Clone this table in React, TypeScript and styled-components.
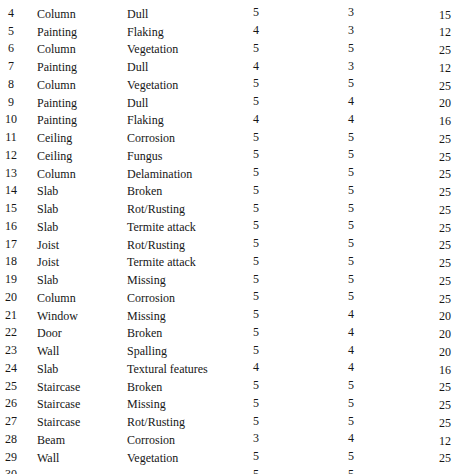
import React from "react";
import styled, { createGlobalStyle } from "styled-components";

const GlobalStyle = createGlobalStyle`
  html, body {
    margin: 0;
    padding: 0;
    background: #ffffff;
  }
  body {
    width: 474px;
    height: 474px;
    overflow: hidden;
  }
`;

const TableUI = styled.div`
  padding-top: 4.3px;
  font-family: "Liberation Serif", "Times New Roman", serif;
  font-size: 12px;
  color: #161616;
`;

const RowUI = styled.div`
  display: grid;
  grid-template-columns: 37px 90px 126px 95px 91px 1fr;
  height: 17.75px;
  line-height: 17.75px;
  white-space: nowrap;
`;

// each column of the scan sits a little higher or lower than the others
const CellUI = styled.div<{ $shift?: number; $center?: boolean }>`
  padding-top: ${(p) => p.$shift || 0}px;
  ${(p) => (p.$center ? "width: 22px; text-align: center;" : "")}
`;

const rows: string[][] = [
  ["4", "Column", "Dull", "5", "3", "15"],
  ["5", "Painting", "Flaking", "4", "3", "12"],
  ["6", "Column", "Vegetation", "5", "5", "25"],
  ["7", "Painting", "Dull", "4", "3", "12"],
  ["8", "Column", "Vegetation", "5", "5", "25"],
  ["9", "Painting", "Dull", "5", "4", "20"],
  ["10", "Painting", "Flaking", "4", "4", "16"],
  ["11", "Ceiling", "Corrosion", "5", "5", "25"],
  ["12", "Ceiling", "Fungus", "5", "5", "25"],
  ["13", "Column", "Delamination", "5", "5", "25"],
  ["14", "Slab", "Broken", "5", "5", "25"],
  ["15", "Slab", "Rot/Rusting", "5", "5", "25"],
  ["16", "Slab", "Termite attack", "5", "5", "25"],
  ["17", "Joist", "Rot/Rusting", "5", "5", "25"],
  ["18", "Joist", "Termite attack", "5", "5", "25"],
  ["19", "Slab", "Missing", "5", "5", "25"],
  ["20", "Column", "Corrosion", "5", "5", "25"],
  ["21", "Window", "Missing", "5", "4", "20"],
  ["22", "Door", "Broken", "5", "4", "20"],
  ["23", "Wall", "Spalling", "5", "4", "20"],
  ["24", "Slab", "Textural features", "4", "4", "16"],
  ["25", "Staircase", "Broken", "5", "5", "25"],
  ["26", "Staircase", "Missing", "5", "5", "25"],
  ["27", "Staircase", "Rot/Rusting", "5", "5", "25"],
  ["28", "Beam", "Corrosion", "3", "4", "12"],
  ["29", "Wall", "Vegetation", "5", "5", "25"],
  ["30", "", "", "5", "5", ""],
];

const App: React.FC = () => {
  return (
    <>
      <GlobalStyle />
      <TableUI>
        {rows.map((r) => (
          <RowUI key={r[0]}>
            <CellUI $center $shift={0.7}>
              {r[0]}
            </CellUI>
            <CellUI $shift={1.7}>{r[1]}</CellUI>
            <CellUI $shift={1.7}>{r[2]}</CellUI>
            <CellUI>{r[3]}</CellUI>
            <CellUI>{r[4]}</CellUI>
            <CellUI $shift={2.4}>{r[5]}</CellUI>
          </RowUI>
        ))}
      </TableUI>
    </>
  );
};

export default App;
